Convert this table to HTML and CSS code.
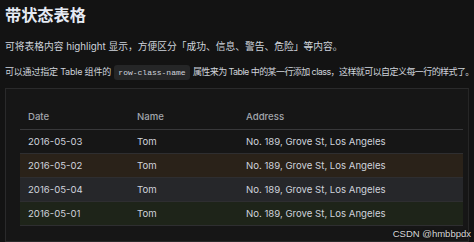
FILE: index.html
```html
<!DOCTYPE html>
<html lang="zh">
<head>
<meta charset="utf-8">
<link rel="stylesheet" href="styles.css">
</head>
<body>
<h2 class="title">带状态表格</h2>
<p class="desc">可将表格内容 highlight 显示，方便区分「成功、信息、警告、危险」等内容。</p>
<p class="desc desc2">可以通过指定 Table 组件的 <code class="code">row-class-name</code> <span class="tight">属性来为 Table 中的某一行添加 class，这样就可以自定义每一行的样式了。</span></p>
<div class="card">
  <table class="table">
    <colgroup><col class="c1"><col class="c2"><col class="c3"></colgroup>
    <thead>
      <tr><th>Date</th><th>Name</th><th>Address</th></tr>
    </thead>
    <tbody>
      <tr><td>2016-05-03</td><td>Tom</td><td>No. 189, Grove St, Los Angeles</td></tr>
      <tr class="warning"><td>2016-05-02</td><td>Tom</td><td>No. 189, Grove St, Los Angeles</td></tr>
      <tr class="info"><td>2016-05-04</td><td>Tom</td><td>No. 189, Grove St, Los Angeles</td></tr>
      <tr class="success"><td>2016-05-01</td><td>Tom</td><td>No. 189, Grove St, Los Angeles</td></tr>
    </tbody>
  </table>
</div>
<div class="watermark">CSDN @hmbbpdx</div>
</body>
</html>
```
FILE: styles.css
```css
html, body {
  margin: 0;
  padding: 0;
  background: #131313;
}
body {
  position: relative;
  width: 474px;
  height: 242px;
  overflow: hidden;
  padding: 0 0 0 5px;
  box-sizing: border-box;
  font-family: Inter, "Noto Sans CJK SC", sans-serif;
  color: #cfd3dc;
}
.title {
  margin: 3px 0 0 0;
  font-size: 16.2px;
  line-height: 24px;
  font-weight: 700;
  color: #e5eaf3;
}
.desc {
  margin: 12px 0 0 0;
  font-size: 9.75px;
  line-height: 16px;
  color: #cfd3dc;
  white-space: nowrap;
}
.desc2 {
  margin-top: 9px;
  font-size: 9px;
  letter-spacing: -0.2px;
}
.tight {
  letter-spacing: -0.58px;
}
.code {
  display: inline-block;
  font-family: "Liberation Mono", monospace;
  font-size: 8px;
  line-height: 15px;
  padding: 0 4px;
  margin: 0 1px;
  letter-spacing: 0;
  background: #252627;
  border-radius: 3px;
  color: #cfd3dc;
}
.card {
  margin-top: 8px;
  width: 464px;
  box-sizing: border-box;
  border: 1px solid #2a2a2b;
  border-right-color: #262626;
  background: #161616;
  padding: 15px 4px 15px 14px;
}
.table {
  width: 443px;
  border-collapse: collapse;
  table-layout: fixed;
  font-size: 9.6px;
}
.c1, .c2 { width: 109px; }
.table th, .table td {
  text-align: left;
  padding: 0 8px;
  height: 23px;
  border-bottom: 1px solid #2e2e30;
  white-space: nowrap;
}
.table th {
  color: #a3a6ad;
  font-weight: 500;
  height: 25px;
  border-bottom-color: #38383a;
}
.table td { color: #cfd3dc; }
.table tr.warning td { background: #2a2219; }
.table tr.info td { background: #26272a; }
.table tr.success td { background: #1e2419; }
.watermark {
  position: absolute;
  right: 3px;
  bottom: 3px;
  font-family: "Liberation Sans", Arial, sans-serif;
  font-size: 9.5px;
  color: #d8d8d8;
  text-shadow: 0 0 2px #000;
}
```
